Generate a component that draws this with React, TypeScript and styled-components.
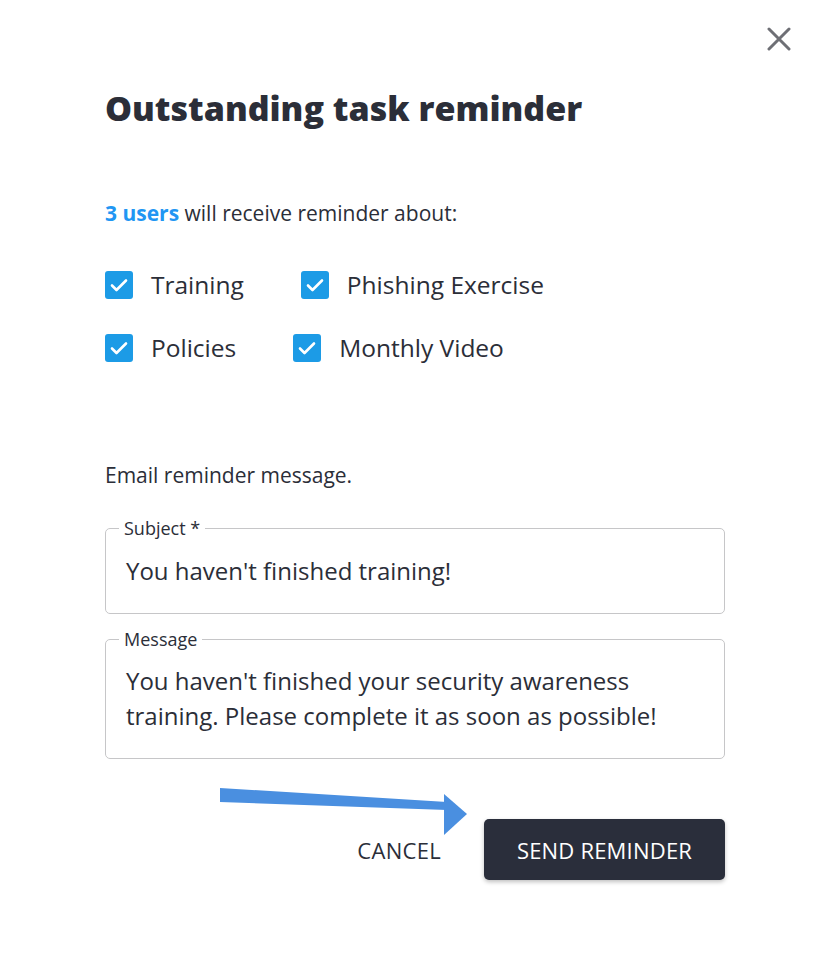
import React from "react";
import styled, { createGlobalStyle } from "styled-components";

const Global = createGlobalStyle`
  html, body { margin: 0; padding: 0; background: #ffffff; }
  body { font-family: "Open Sans", "Noto Sans", sans-serif; color: #2b2e38; }
  * { box-sizing: border-box; }
`;

const Dialog = styled.div`
  position: relative;
  width: 831px;
  height: 971px;
  padding: 80px 106px 0 105px;
  display: flex;
  flex-direction: column;
`;

const CloseButton = styled.button`
  position: absolute;
  top: 27px;
  right: 40px;
  width: 24px;
  height: 24px;
  padding: 0;
  border: none;
  background: transparent;
  color: #6e6f75;
  display: flex;
  align-items: center;
  justify-content: center;
`;

const Title = styled.h1`
  margin: 0;
  font-size: 34px;
  line-height: 56px;
  font-weight: 800;
  color: #2b2e38;
`;

const Intro = styled.p`
  margin: 64px 0 0;
  font-size: 21px;
  line-height: 26px;
  color: #2b2e38;
`;

const Users = styled.span`
  color: #2196f3;
  font-weight: 700;
`;

const CheckGrid = styled.div`
  margin-top: 44px;
  display: flex;
  flex-direction: column;
  gap: 33px;
`;

const CheckRow = styled.div`
  display: flex;
  align-items: center;
  gap: 57px;
`;

const CheckItem = styled.label`
  display: flex;
  align-items: center;
  gap: 18px;
  font-size: 24.5px;
  line-height: 30px;
  color: #2b2e38;
`;

const Box = styled.span`
  width: 28px;
  height: 28px;
  border-radius: 3px;
  background: #1c9be6;
  display: flex;
  align-items: center;
  justify-content: center;
`;

const Section = styled.p`
  margin: 99px 0 0;
  font-size: 21px;
  line-height: 26px;
  color: #2b2e38;
`;

const Field = styled.fieldset<{ $height: number; $gap: number }>`
  margin: ${(p) => p.$gap}px 0 0;
  padding: 0 20px;
  height: ${(p) => p.$height}px;
  border: 1px solid #c6c6c8;
  border-radius: 5px;
  min-width: 0;
`;

const Legend = styled.legend`
  padding: 0 5px;
  margin-left: -7px;
  font-size: 18px;
  line-height: 20px;
  color: #2b2e38;
`;

const Value = styled.div<{ $top: number }>`
  margin-top: ${(p) => p.$top}px;
  font-size: 24px;
  line-height: 35px;
  color: #2b2e38;
`;

const Actions = styled.div`
  margin-top: 60px;
  display: flex;
  justify-content: flex-end;
  align-items: center;
  gap: 43px;
`;

const TextButton = styled.button`
  border: none;
  background: transparent;
  padding: 0;
  font-family: inherit;
  font-size: 22px;
  letter-spacing: 0.3px;
  color: #2b2e38;
`;

const PrimaryButton = styled.button`
  width: 241px;
  height: 61px;
  border: none;
  border-radius: 5px;
  background: #2a2e3b;
  color: #ffffff;
  font-family: inherit;
  font-size: 22px;
  letter-spacing: 0.2px;
  box-shadow: 0 2px 4px rgba(0, 0, 0, 0.25);
`;

const Arrow = styled.svg`
  position: absolute;
  left: 215px;
  top: 788px;
`;

const Check = () => (
  <Box>
    <svg width="18" height="14" viewBox="0 0 18 14">
      <path d="M2 7.5 L6.5 12 L16 2.5" fill="none" stroke="#fff" strokeWidth="2.6" strokeLinecap="round" strokeLinejoin="round" />
    </svg>
  </Box>
);

export default function App() {
  return (
    <>
      <Global />
      <Dialog>
        <CloseButton aria-label="close">
          <svg width="24" height="24" viewBox="0 0 24 24">
            <path d="M2 2 L22 22 M22 2 L2 22" stroke="currentColor" strokeWidth="3" strokeLinecap="round" />
          </svg>
        </CloseButton>
        <Title>Outstanding task reminder</Title>
        <Intro>
          <Users>3 users</Users> will receive reminder about:
        </Intro>
        <CheckGrid>
          <CheckRow>
            <CheckItem><Check />Training</CheckItem>
            <CheckItem><Check />Phishing Exercise</CheckItem>
          </CheckRow>
          <CheckRow>
            <CheckItem><Check />Policies</CheckItem>
            <CheckItem><Check />Monthly Video</CheckItem>
          </CheckRow>
        </CheckGrid>
        <Section>Email reminder message.</Section>
        <Field $height={96} $gap={30}>
          <Legend>Subject *</Legend>
          <Value $top={15}>You haven't finished training!</Value>
        </Field>
        <Field $height={130} $gap={15}>
          <Legend>Message</Legend>
          <Value $top={14}>
            You haven't finished your security awareness
            <br />
            training. Please complete it as soon as possible!
          </Value>
        </Field>
        <Actions>
          <TextButton>CANCEL</TextButton>
          <PrimaryButton>SEND REMINDER</PrimaryButton>
        </Actions>
        <Arrow width="260" height="52" viewBox="0 0 260 52">
          <polygon points="5,0 232,14 232,22 5,14" fill="#4a8fe0" />
          <polygon points="229,6 252,26 229,47" fill="#4a8fe0" />
        </Arrow>
      </Dialog>
    </>
  );
}
